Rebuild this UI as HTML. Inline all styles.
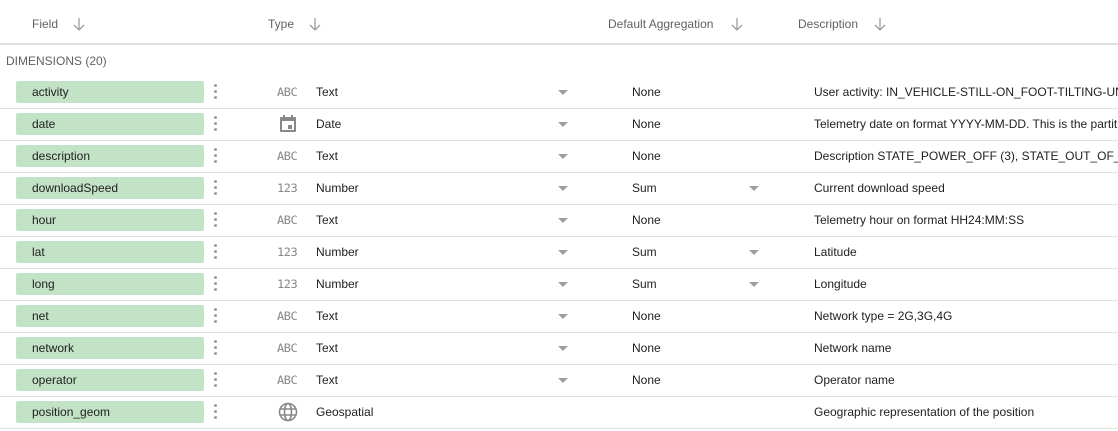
<!DOCTYPE html><html><head><style>
body{margin:0;width:1118px;height:431px;overflow:hidden;background:#fff;font-family:"Liberation Sans",Arial,sans-serif;font-size:12px;color:#212121;position:relative}
.h{position:absolute;top:17px;font-size:12px;color:#616161}
.h svg{position:absolute;top:-1px}
.hl{position:absolute;left:0;top:43px;width:1118px;height:2px;background:#e0e0e0}
.dim{position:absolute;left:6px;top:54px;color:#616161;font-size:12px}
.r{position:absolute;left:0;width:1118px;height:32px;border-bottom:1px solid #e0e0e0}
.chip{position:absolute;left:16px;top:5px;width:172px;height:22px;background:#c3e3c6;border-radius:2px;padding-left:16px;line-height:22px}
.dots{position:absolute;left:214px;top:8px;width:4px}
.dots i{display:block;width:3px;height:3px;background:#9e9e9e;border-radius:50%;margin-bottom:3px}
.ic{position:absolute;left:277px;top:9px;font-family:"DejaVu Sans Mono",monospace;font-size:12px;color:#888;letter-spacing:-0.5px;transform:scaleY(0.95)}
.t{position:absolute;left:316px;top:9px}
.dd{position:absolute;top:14px;width:0;height:0;border-left:5px solid transparent;border-right:5px solid transparent;border-top:5px solid #9e9e9e}
.a{position:absolute;left:632px;top:9px}
.d{position:absolute;left:814px;top:9px;white-space:nowrap}
</style></head><body>
<div class="h" style="left:32px">Field<svg style="left:40px" width="14" height="16" viewBox="0 0 14 16" fill="none" stroke="#9e9e9e" stroke-width="1.3"><line x1="7" y1="2" x2="7" y2="14"/><polyline points="2,9 7,14 12,9"/></svg></div>
<div class="h" style="left:268px">Type<svg style="left:40px" width="14" height="16" viewBox="0 0 14 16" fill="none" stroke="#9e9e9e" stroke-width="1.3"><line x1="7" y1="2" x2="7" y2="14"/><polyline points="2,9 7,14 12,9"/></svg></div>
<div class="h" style="left:608px">Default Aggregation<svg style="left:122px" width="14" height="16" viewBox="0 0 14 16" fill="none" stroke="#9e9e9e" stroke-width="1.3"><line x1="7" y1="2" x2="7" y2="14"/><polyline points="2,9 7,14 12,9"/></svg></div>
<div class="h" style="left:798px">Description<svg style="left:75px" width="14" height="16" viewBox="0 0 14 16" fill="none" stroke="#9e9e9e" stroke-width="1.3"><line x1="7" y1="2" x2="7" y2="14"/><polyline points="2,9 7,14 12,9"/></svg></div>
<div class="hl"></div>
<div class="dim">DIMENSIONS (20)</div>

<div class="r" style="top:76px"><div class="chip">activity</div><div class="dots"><i></i><i></i><i></i></div><div class="ic">ABC</div><div class="t">Text</div><div class="dd" style="left:558px"></div><div class="a">None</div><div class="d">User activity: IN_VEHICLE-STILL-ON_FOOT-TILTING-UNKNOWN</div></div>
<div class="r" style="top:108px"><div class="chip">date</div><div class="dots"><i></i><i></i><i></i></div><svg style="position:absolute;left:278px;top:6px" width="20" height="20" viewBox="0 0 20 20"><rect x="2" y="3" width="16" height="15" rx="1" fill="#888"/><rect x="4" y="7" width="12" height="9" fill="#fff"/><rect x="5" y="1" width="2" height="4" fill="#888"/><rect x="13" y="1" width="2" height="4" fill="#888"/><rect x="10" y="11" width="4" height="4" fill="#888"/></svg><div class="t">Date</div><div class="dd" style="left:558px"></div><div class="a">None</div><div class="d">Telemetry date on format YYYY-MM-DD. This is the partition field</div></div>
<div class="r" style="top:140px"><div class="chip">description</div><div class="dots"><i></i><i></i><i></i></div><div class="ic">ABC</div><div class="t">Text</div><div class="dd" style="left:558px"></div><div class="a">None</div><div class="d">Description STATE_POWER_OFF (3), STATE_OUT_OF_SERVICE</div></div>
<div class="r" style="top:172px"><div class="chip">downloadSpeed</div><div class="dots"><i></i><i></i><i></i></div><div class="ic">123</div><div class="t">Number</div><div class="dd" style="left:558px"></div><div class="a">Sum</div><div class="dd" style="left:749px"></div><div class="d">Current download speed</div></div>
<div class="r" style="top:204px"><div class="chip">hour</div><div class="dots"><i></i><i></i><i></i></div><div class="ic">ABC</div><div class="t">Text</div><div class="dd" style="left:558px"></div><div class="a">None</div><div class="d">Telemetry hour on format HH24:MM:SS</div></div>
<div class="r" style="top:236px"><div class="chip">lat</div><div class="dots"><i></i><i></i><i></i></div><div class="ic">123</div><div class="t">Number</div><div class="dd" style="left:558px"></div><div class="a">Sum</div><div class="dd" style="left:749px"></div><div class="d">Latitude</div></div>
<div class="r" style="top:268px"><div class="chip">long</div><div class="dots"><i></i><i></i><i></i></div><div class="ic">123</div><div class="t">Number</div><div class="dd" style="left:558px"></div><div class="a">Sum</div><div class="dd" style="left:749px"></div><div class="d">Longitude</div></div>
<div class="r" style="top:300px"><div class="chip">net</div><div class="dots"><i></i><i></i><i></i></div><div class="ic">ABC</div><div class="t">Text</div><div class="dd" style="left:558px"></div><div class="a">None</div><div class="d">Network type = 2G,3G,4G</div></div>
<div class="r" style="top:332px"><div class="chip">network</div><div class="dots"><i></i><i></i><i></i></div><div class="ic">ABC</div><div class="t">Text</div><div class="dd" style="left:558px"></div><div class="a">None</div><div class="d">Network name</div></div>
<div class="r" style="top:364px"><div class="chip">operator</div><div class="dots"><i></i><i></i><i></i></div><div class="ic">ABC</div><div class="t">Text</div><div class="dd" style="left:558px"></div><div class="a">None</div><div class="d">Operator name</div></div>
<div class="r" style="top:396px"><div class="chip">position_geom</div><div class="dots"><i></i><i></i><i></i></div><svg style="position:absolute;left:278px;top:6px" width="20" height="20" viewBox="0 0 20 20" fill="none" stroke="#888" stroke-width="1.6"><circle cx="10" cy="10" r="8.5"/><ellipse cx="10" cy="10" rx="3.5" ry="8.5"/><line x1="1.5" y1="7" x2="18.5" y2="7"/><line x1="1.5" y1="13" x2="18.5" y2="13"/></svg><div class="t">Geospatial</div><div class="d">Geographic representation of the position</div></div>
</body></html>
